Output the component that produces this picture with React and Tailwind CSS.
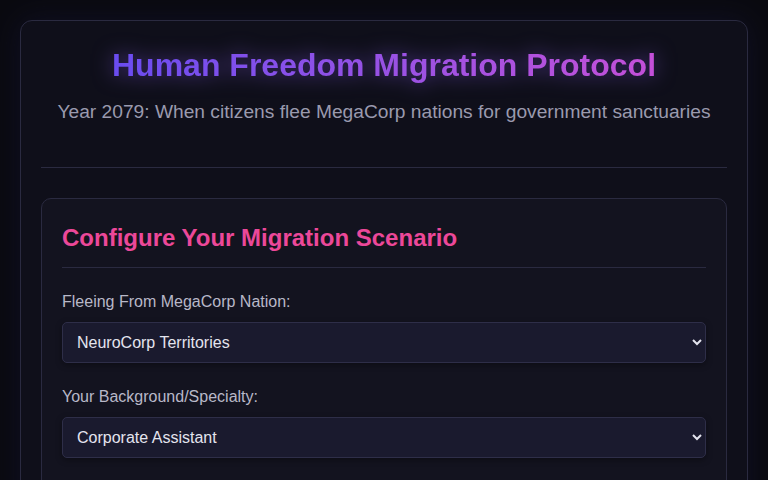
const fleeOptions = ['NeuroCorp Territories', 'OmniTech Dominion', 'Synthex Federation', 'BioGenix Collective'];
const specialties = ['Corporate Assistant', 'Data Analyst', 'Security Engineer', 'Medical Technician'];

const Field = ({ label, options }) => (
  <div className="mb-[15px]">
    <label className="block text-[16px] leading-[19px] text-[#b8b8c8] mb-[11px]">{label}</label>
    <select className="w-full h-[41px] px-[10px] rounded-[5px] bg-[#1a1a2e] border border-[#2e2e48] text-[16px] text-[#e4e4ee] shadow-[0_2px_6px_rgba(0,0,0,0.35)] outline-none">
      {options.map((o) => (
        <option key={o}>{o}</option>
      ))}
    </select>
  </div>
);

const App = () => {
  return (
    <div className="min-h-screen bg-[#0a0a10] pt-5 px-5 font-['Liberation_Sans',Arial,sans-serif] overflow-hidden">
      <div className="h-[600px] rounded-[12px] border border-[#2a2a40] bg-[#0f0f1a] shadow-[0_0_30px_rgba(20,20,50,0.6)] px-5 pt-[25px]">
        {/* Header */}
        <header className="text-center pb-[25px] border-b border-[#2a2a40] mb-[30px]">
          <h1 className="text-[32px] leading-[38px] font-bold inline-block bg-gradient-to-r from-[#6a4cf0] to-[#c44fd8] bg-clip-text text-transparent drop-shadow-[0_0_10px_rgba(139,92,246,0.55)]">
            Human Freedom Migration Protocol
          </h1>
          <p className="mt-[16px] text-[19.2px] leading-[24px] text-[#9a9aae]">
            Year 2079: When citizens flee MegaCorp nations for government sanctuaries
          </p>
          <div className="h-[18px]" />
        </header>

        {/* Config card */}
        <section className="rounded-[10px] border border-[#2a2a40] bg-[#13131f] px-5 pt-[24px] pb-[60px]">
          <h2 className="text-[24px] leading-[30px] font-bold text-[#ec4899] pb-[14px] border-b border-[#2a2a40] mb-[24px]">
            Configure Your Migration Scenario
          </h2>
          <Field label="Fleeing From MegaCorp Nation:" options={fleeOptions} />
          <div className="h-[9px]" />
          <Field label="Your Background/Specialty:" options={specialties} />
        </section>
      </div>
    </div>
  );
};

export default App;
